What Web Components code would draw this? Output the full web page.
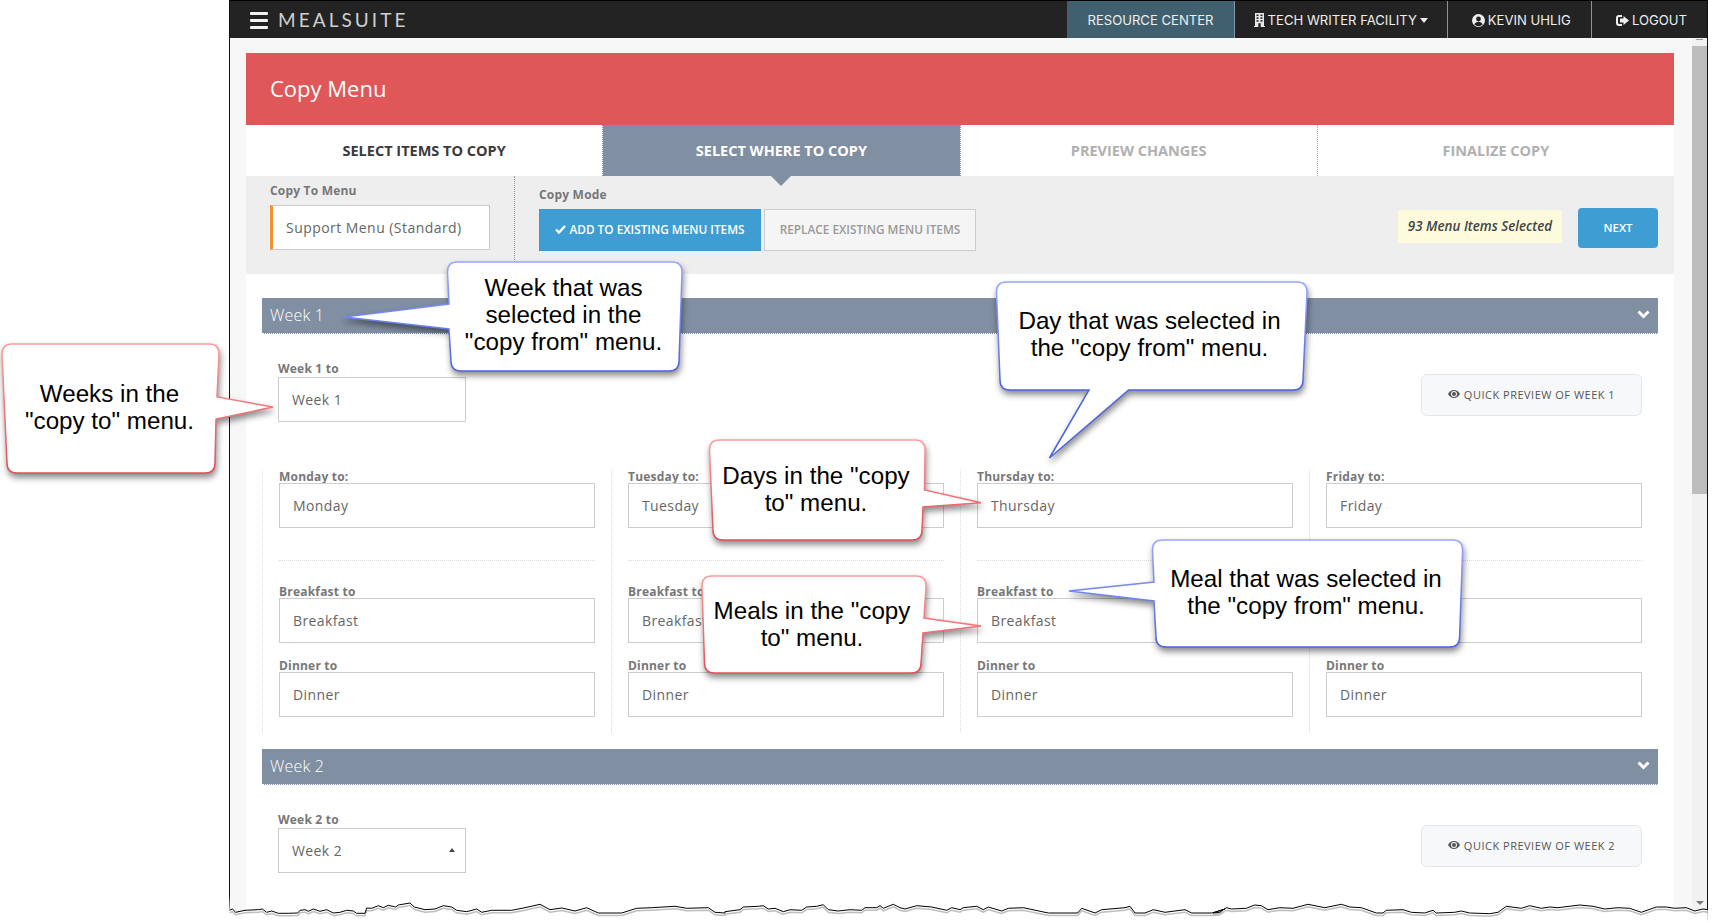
<!DOCTYPE html>
<html lang="en"><head><meta charset="utf-8"><title>Copy Menu</title>
<style>
html,body{margin:0;padding:0;background:#fff;height:923px;overflow:hidden;font-family:"Open Sans",sans-serif}
</style></head><body>
<ms-stage>
  <ms-window>
    <ms-navbar>
      <ms-navitem active w="168">RESOURCE CENTER</ms-navitem>
      <ms-navitem icon="building" caret w="212.5">TECH WRITER FACILITY</ms-navitem>
      <ms-navitem icon="user" w="144.5">KEVIN UHLIG</ms-navitem>
      <ms-navitem icon="logout" w="115" last>LOGOUT</ms-navitem>
    </ms-navbar>
    <ms-viewport>
      <ms-panel title="Copy Menu">
        <ms-tabs>
          <ms-tab state="done">SELECT ITEMS TO COPY</ms-tab>
          <ms-tab state="active">SELECT WHERE TO COPY</ms-tab>
          <ms-tab state="todo">PREVIEW CHANGES</ms-tab>
          <ms-tab state="todo" sep>FINALIZE COPY</ms-tab>
        </ms-tabs>
        <ms-options></ms-options>
        <ms-content>
          <ms-week name="Week 1" label="Week 1 to" value="Week 1" preview="QUICK PREVIEW OF WEEK 1">
            <ms-days>
              <ms-day day="Monday"></ms-day>
              <ms-day day="Tuesday"></ms-day>
              <ms-day day="Thursday"></ms-day>
              <ms-day day="Friday"></ms-day>
            </ms-days>
          </ms-week>
          <ms-week name="Week 2" label="Week 2 to" value="Week 2" arrow preview="QUICK PREVIEW OF WEEK 2"></ms-week>
        </ms-content>
      </ms-panel>
    </ms-viewport>
  </ms-window>
  <torn-edge></torn-edge>
  <call-out tone="red" x="0" y="344" w="222" h="130" cx="109.5" ty="379.5" corners="2,344 219,344 215,473 7,473" side="right" tail="217,397 273,407 216,419">Weeks in the<br>"copy to" menu.</call-out>
  <call-out tone="blue" x="447" y="262" w="235" h="110" cx="563.5" ty="274" corners="447.5,262 682,262 679,371 451,371" side="left" tail="449,329 344,317 449,304">Week that was<br>selected in the<br>"copy from" menu.</call-out>
  <call-out tone="blue" x="996" y="282" w="312" h="110" cx="1149.5" ty="306.5" corners="996.5,282 1307,282 1303,390 1000,390" side="bottom" tail="1128.6,390 1049.5,458 1089,390">Day that was selected in<br>the "copy from" menu.</call-out>
  <call-out tone="red" x="709" y="440" w="217" h="101" cx="816" ty="461.5" corners="709.5,440 925,440 922,540 713,540" side="right" tail="924.5,490 981,502.7 923,507">Days in the "copy<br>to" menu.</call-out>
  <call-out tone="red" x="702" y="576" w="225" h="98" cx="812" ty="596.5" corners="702,576 926,576 921,673 704.5,673" side="right" tail="924,618 981,626 923,633">Meals in the "copy<br>to" menu.</call-out>
  <call-out tone="blue" x="1152" y="540" w="311" h="108" cx="1306" ty="565" corners="1152.5,540 1462.6,540 1459.6,647 1156,647" side="left" tail="1154,601 1069,591 1154,582">Meal that was selected in<br>the "copy from" menu.</call-out>
</ms-stage>
<script>
const OS='"Open Sans","Noto Sans",sans-serif';
function el(name,css,html,init){
  customElements.define(name,class extends HTMLElement{
    constructor(){super();this.attachShadow({mode:'open'});}
    connectedCallback(){
      if(this._d)return;this._d=1;
      const h=typeof html==='function'?html(this):html;
      this.shadowRoot.innerHTML='<style>'+css+'</style>'+h;
      if(init)init(this);
    }
  });
}
const esc=s=>(s||'').replace(/&/g,'&amp;').replace(/"/g,'&quot;');
const ICONS={
 building:'<svg width="11" height="14" viewBox="0 0 11 14"><path fill="#e8e8e8" d="M1 0h9v13h1v1H0v-1h1z"/><g fill="#232323"><rect x="2.5" y="1.5" width="2" height="1.6"/><rect x="6.5" y="1.5" width="2" height="1.6"/><rect x="2.5" y="4.3" width="2" height="1.6"/><rect x="6.5" y="4.3" width="2" height="1.6"/><rect x="2.5" y="7.1" width="2" height="1.6"/><rect x="6.5" y="7.1" width="2" height="1.6"/><rect x="4.3" y="10.2" width="2.4" height="3.8"/></g></svg>',
 user:'<svg width="13" height="13" viewBox="0 0 13 13"><circle cx="6.5" cy="6.5" r="6.5" fill="#efefef"/><circle cx="6.5" cy="5" r="2.4" fill="#232323"/><path fill="#232323" d="M2.4 10.6c.6-2 2.2-2.8 4.1-2.8s3.5.8 4.1 2.8a6 6 0 0 1-8.2 0z"/></svg>',
 logout:'<svg width="13" height="11" viewBox="0 0 13 11"><path fill="#efefef" d="M3 0h3v2H3.2C2.5 2 2 2.5 2 3.2v4.6C2 8.500 2.500 9 3.200 9H6v2H3a3 3 0 0 1-3-3V3a3 3 0 0 1 3-3z"/><path fill="#efefef" d="M7.500 1 13 5.500 7.500 10V7.500H4v-4h3.500z"/></svg>'
};
el('ms-stage',':host{display:block;position:relative;width:1713px;height:923px;overflow:hidden;background:#fff}.f{display:flex;padding-left:229px}','<div class="f"><slot></slot></div>');
el('ms-window',':host{display:flex;flex-direction:column;width:1479px;box-sizing:border-box;height:923px;border-left:1px solid #111;border-right:1px solid #111;background:#f7f7f7;flex:none;overflow:hidden}','<slot></slot>');
el('ms-navbar',`:host{display:flex;flex:none;height:38px;box-sizing:border-box;background:#232323;border-top:1px solid #000;align-items:stretch}
.brand{display:flex;align-items:center;padding-left:20px;flex:1}
.bars{display:flex;flex-direction:column;gap:3.500px;width:18px;margin-right:10px;margin-top:2px}
.bars i{display:block;height:3.500px;background:#f2f2f2;border-radius:1px}
.logo{font:400 19px Lato,sans-serif;letter-spacing:3.050px;color:#cfcfcf;line-height:1}
.items{display:flex}`,
`<div class="brand"><div class="bars"><i></i><i></i><i></i></div><span class="logo">MEALSUITE</span></div><div class="items"><slot></slot></div>`);
el('ms-navitem',`:host{display:flex;align-items:center;justify-content:center;gap:3px;box-sizing:border-box;height:37px;color:#eee;font:400 13.100px Inter,"Liberation Sans",sans-serif;border-right:1px solid #7d98a8;white-space:nowrap;padding-top:1px}
:host([active]){background:#41606f}
:host([last]){border-right:0}
:host([icon=user]),:host([icon=logout]){padding-left:4px}
.c{width:0;height:0;border:4px solid transparent;border-top:5px solid #eee;border-bottom:0;margin-left:0}
svg{display:block;flex:none}`,
t=>{t.style.width=t.getAttribute('w')+'px';return (ICONS[t.getAttribute('icon')]||'')+'<slot></slot>'+(t.hasAttribute('caret')?'<span class="c"></span>':'');});
el('ms-viewport',`:host{display:flex;flex:1;min-height:0}
.m{flex:1;padding:15px 18px 0 16px;min-width:0}
.sb{flex:none;width:15px;background:#f1f1f1;display:flex;flex-direction:column;align-items:stretch;position:relative}
.up{height:8px;flex:none;display:flex;justify-content:center;padding-top:1px;box-sizing:border-box}
.up i{display:block;width:7px;height:1px;background:#999}
.th{height:448px;background:#bdbdbd;flex:none}
.dn{position:absolute;left:3.500px;top:863px;width:0;height:0;border:4px solid transparent;border-top:4px solid #777;border-bottom:0}`,
`<div class="m"><slot></slot></div><div class="sb"><div class="up"><i></i></div><div class="th"></div><div class="dn"></div></div>`);
el('ms-panel',`:host{display:block;background:#fff}
.h{height:72px;background:#df5759;color:#fff;font:400 22px/70px ${OS};padding-left:24px}`,
t=>`<div class="h">${esc(t.getAttribute('title'))}</div><slot></slot>`);
el('ms-tabs',':host{display:flex;height:51px}','<slot></slot>');
el('ms-tab',`:host{flex:1 1 0;display:flex;align-items:center;justify-content:center;font:700 14.500px ${OS};position:relative;color:#3a3a3a;box-sizing:border-box}
:host([state=active]){background:#818fa2;background-clip:padding-box;color:#fff;border-left:1px dotted #818fa2;border-right:1px dotted #818fa2}
:host([state=todo]){color:#b0b0b0}
:host([sep]){border-left:1px dotted #aaa}
.a{position:absolute;left:50%;top:100%;margin-left:-10px;width:0;height:0;border:10px solid transparent;border-top:10px solid #818fa2;border-bottom:0;z-index:2}`,
t=>'<slot></slot>'+(t.getAttribute('state')==='active'?'<i class="a"></i>':''));
el('ms-options',`:host{display:flex;height:98px;background:#eee;color:#777}
.a{width:269px;box-sizing:border-box;flex:none;border-right:1px dotted #999;padding:8px 0 0 24px}
.b{flex:1;padding:12px 0 0 24px;display:flex}
.l{font:700 12px/14px ${OS};color:#777;letter-spacing:.2px;margin-bottom:7px;display:block}
.sel{width:220px;height:45px;box-sizing:border-box;border:1px solid #ccc;border-left:3px solid #f0912b;background:#fff;font:400 14px/43px ${OS};letter-spacing:.45px;color:#666;padding-left:13px}
.btns{display:flex;gap:3px}
button{font:600 11.800px ${OS};height:42px;box-sizing:border-box;padding:0 0 2px;border:1px solid #3d9bd1;background:#3e9dd3;color:#fff;width:222px;display:flex;align-items:center;justify-content:center;gap:3px}
button.o{background:#f5f5f5;border:1px solid #ccc;color:#999;width:212px}
.r{margin-left:auto;display:flex;gap:16px;padding:20px 16px 0 0;align-items:flex-start;box-sizing:border-box}
.y{margin-top:2px;height:33px;width:164px;background:#fdfbdc;color:#444;font:italic 600 13.400px/33px ${OS};text-align:center;white-space:nowrap}
.r button.n{width:80px;height:40px;background:#3e9dd3;border:0;border-radius:4px;color:#fff;font:600 11.500px ${OS}}`,
`<div class="a"><span class="l">Copy To Menu</span><div class="sel">Support Menu (Standard)</div></div>
<div class="b"><div><span class="l">Copy Mode</span><div class="btns"><button><svg width="11" height="9" viewBox="0 0 11 9"><path fill="none" stroke="#fff" stroke-width="2.400" d="M1 4.500l3 3L10 1"/></svg>ADD TO EXISTING MENU ITEMS</button><button class="o">REPLACE EXISTING MENU ITEMS</button></div></div>
<div class="r"><div class="y">93 Menu Items Selected</div><button class="n">NEXT</button></div></div>`);
el('ms-content',':host{display:block;padding:24px 16px 70px}','<slot></slot>');
el('ms-field',`:host{display:block}
label{display:block;font:700 12px/14px ${OS};color:#777;letter-spacing:.2px;margin-bottom:var(--gap,0)}
.i{height:45px;box-sizing:border-box;border:1px solid #ccc;background:#fff;font:400 14px/43px ${OS};letter-spacing:.4px;color:#666;padding-left:13px;position:relative}
.ar{position:absolute;right:10px;top:19px;width:0;height:0;border:3.500px solid transparent;border-bottom:4px solid #444;border-top:0}`,
t=>`<label>${esc(t.getAttribute('label'))}</label><div class="i">${esc(t.getAttribute('value'))}${t.hasAttribute('arrow')?'<i class="ar"></i>':''}</div>`);
el('ms-week',`:host{display:block;margin-bottom:16px}
.bar{height:36px;box-sizing:border-box;background:#818fa2;border-bottom:1px dotted #fff;color:#fff;font:300 16px/34px ${OS};letter-spacing:.2px;padding:0 8px 2px;display:flex;justify-content:space-between;align-items:center}
.bar svg{display:block}
.row{display:flex;justify-content:space-between;padding:28px 16px 0;align-items:flex-start}
ms-field{width:188px;--gap:1px}
.q{margin-top:12px;width:221px;height:42px;box-sizing:border-box;border:1px solid #e3e6ea;border-radius:6px;background:#f7f8fa;color:#555;font:400 11px ${OS};letter-spacing:.5px;display:flex;align-items:center;justify-content:center;gap:4px;padding-bottom:2px}
.body{padding-top:48px;display:block}
.body.e{display:none}`,
t=>`<div class="bar"><span>${esc(t.getAttribute('name'))}</span><svg width="13" height="9" viewBox="0 0 13 9"><path fill="none" stroke="#fff" stroke-width="3" d="M1.500 1.500l5 5 5-5"/></svg></div>
<div class="row"><ms-field label="${esc(t.getAttribute('label'))}" value="${esc(t.getAttribute('value'))}" ${t.hasAttribute('arrow')?'arrow':''}></ms-field>
<div class="q"><svg width="12" height="8" viewBox="0 0 12 8"><path fill="#555" d="M6 0c2.800 0 4.900 2 6 4-1.100 2-3.200 4-6 4S1.100 6 0 4c1.100-2 3.200-4 6-4z"/><circle cx="6" cy="4" r="3" fill="#f7f8fa"/><circle cx="6" cy="4" r="2" fill="#555"/></svg>${esc(t.getAttribute('preview'))}</div></div>
<div class="body${t.children.length?'':' e'}"><slot></slot></div>`);
el('ms-days',':host{display:grid;grid-template-columns:repeat(4,1fr)}','<slot></slot>');
el('ms-day',`:host{display:block;border-left:1px dotted #ddd;padding:0 16px 16px 16px}
hr{border:0;border-top:1px dotted #ddd;margin:32px 0 24px}
.d{height:16px}
ms-field{--gap:-1px}`,
t=>{const d=t.getAttribute('day');return `<ms-field label="${d} to:" value="${d}"></ms-field><hr><ms-field label="Breakfast to" value="Breakfast"></ms-field><div class="d"></div><ms-field label="Dinner to" value="Dinner"></ms-field>`;});
el('call-out',`:host{position:absolute;display:block;z-index:5}
svg{position:absolute;left:0;top:0;width:100%;height:100%;overflow:visible;filter:drop-shadow(1px 4px 3px rgba(0,0,0,.45))}
.t{position:absolute;white-space:nowrap;transform:translateX(-50%);text-align:center;font:400 24.200px/27px "Liberation Sans",Arial,sans-serif;color:#000}`,
t=>{
  const g=a=>parseFloat(t.getAttribute(a));
  const x=g('x'),y=g('y'),w=g('w'),h=g('h');
  t.style.cssText=`left:${x}px;top:${y}px;width:${w}px;height:${h}px`;
  const c=t.getAttribute('corners').split(' ').map(p=>p.split(',').map(Number));
  const tail=t.getAttribute('tail').split(' ').join(' L');
  const side=t.getAttribute('side');
  const r=10,[a,b,e,f]=c;
  let d=`M${a[0]+r},${a[1]} L${b[0]-r},${b[1]} Q${b[0]},${b[1]} ${b[0]},${b[1]+r} `;
  if(side==='right')d+=`L${tail} `;
  d+=`L${e[0]},${e[1]-r} Q${e[0]},${e[1]} ${e[0]-r},${e[1]} `;
  if(side==='bottom')d+=`L${tail} `;
  d+=`L${f[0]+r},${f[1]} Q${f[0]},${f[1]} ${f[0]},${f[1]-r} `;
  if(side==='left')d+=`L${tail} `;
  d+=`L${a[0]},${a[1]+r} Q${a[0]},${a[1]} ${a[0]+r},${a[1]} Z`;
  const blue=t.getAttribute('tone')==='blue';
  const id='g'+x;
  const s1=blue?'#98a6ff':'#ff9c9c',s2=blue?'#4a63e2':'#e44c57';
  return `<svg viewBox="${x} ${y} ${w} ${h}"><defs><linearGradient id="${id}" gradientUnits="userSpaceOnUse" x1="0" y1="${y}" x2="0" y2="${y+h}"><stop offset="0" stop-color="${s1}"/><stop offset="1" stop-color="${s2}"/></linearGradient></defs><path d="${d}" fill="#fff" stroke="url(#${id})" stroke-width="1.500"/></svg><div class="t" style="left:${g('cx')-x}px;top:${g('ty')-y}px"><slot></slot></div>`;
});
const seg=(ox,arr)=>arr.map(p=>[ox+p[0]/3,893+p[1]/3]);
const A=seg(225,[[14,52],[22,48],[32,58],[60,52],[100,50],[112,48],[125,58],[140,54],[160,61],[190,61],[218,60],[225,52],[240,50],[250,55],[265,48],[285,55],[305,50],[325,60],[345,58],[365,52],[385,54],[395,61],[420,61],[425,45],[440,46],[460,38],[475,44],[490,37],[512,42],[520,36],[555,30],[568,42],[600,50],[630,48],[655,38],[680,42],[695,52],[725,56],[755,48],[770,58],[800,52],[860,52],[900,44],[945,34],[975,50],[1010,45],[1050,54],[1085,44],[1120,60],[1190,60],[1235,46],[1280,44],[1350,40],[1385,46],[1450,44],[1470,58],[1500,60]]);
const B=seg(725,[[0,56],[45,50],[55,42],[100,40],[115,38],[130,48],[150,46],[175,56],[195,50],[230,52],[245,42],[275,40],[295,35],[310,50],[340,54],[375,50],[410,52],[420,44],[455,44],[465,38],[475,46],[505,34],[525,44],[540,48],[575,38],[620,42],[665,52],[680,44],[705,50],[715,44],[755,40],[775,50],[790,42],[830,54],[850,46],[895,44],[970,60],[1058,60],[1070,46],[1110,60],[1130,50],[1200,44],[1215,40],[1230,60],[1260,60],[1285,50],[1320,58],[1380,50],[1400,60],[1460,60],[1500,48]]);
const C=seg(1213,[[0,60],[20,58],[40,44],[55,48],[100,46],[125,36],[145,38],[165,50],[200,44],[240,46],[285,34],[335,44],[385,34],[410,42],[445,44],[490,60],[510,60],[520,52],[570,50],[595,58],[635,60],[660,52],[670,60],[725,58],[745,54],[770,60],[830,62],[855,58],[880,40],[925,46],[950,38],[985,46],[1010,42],[1035,44],[1100,36],[1140,40],[1175,48],[1215,44],[1250,46],[1285,58],[1330,42],[1360,42],[1385,46],[1420,44],[1445,54],[1470,48],[1484,50]]);
const T=[...A,...B,...C].map(p=>p[0].toFixed(1)+','+p[1].toFixed(1));
el('torn-edge',`:host{position:absolute;left:0;top:0;width:1713px;height:923px;display:block;z-index:4;pointer-events:none}
svg{display:block;overflow:visible}`,
`<svg width="1713" height="923" viewBox="0 0 1713 923"><path d="M229,895 L${T.join(' L')} L1708,923 L229,923 Z" fill="#fff" stroke="none"/><path d="M${T.join(' L')}" fill="none" stroke="#888" stroke-width="1.500" transform="translate(0,2.500)" opacity=".55"/><path d="M${T.join(' L')}" fill="none" stroke="#000" stroke-width="1"/></svg>`);
</script>
</body></html>
